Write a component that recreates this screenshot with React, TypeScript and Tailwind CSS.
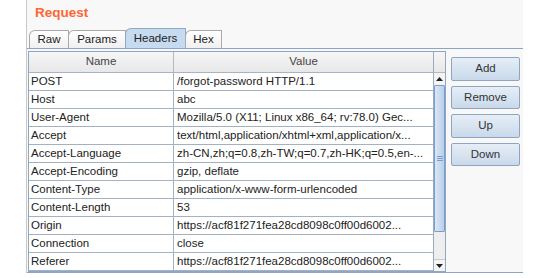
import React from "react";

const rows: [string, string][] = [
  ["POST", "/forgot-password HTTP/1.1"],
  ["Host", "abc"],
  ["User-Agent", "Mozilla/5.0 (X11; Linux x86_64; rv:78.0) Gec..."],
  ["Accept", "text/html,application/xhtml+xml,application/x..."],
  ["Accept-Language", "zh-CN,zh;q=0.8,zh-TW;q=0.7,zh-HK;q=0.5,en-..."],
  ["Accept-Encoding", "gzip, deflate"],
  ["Content-Type", "application/x-www-form-urlencoded"],
  ["Content-Length", "53"],
  ["Origin", "https://acf81f271fea28cd8098c0ff00d6002..."],
  ["Connection", "close"],
  ["Referer", "https://acf81f271fea28cd8098c0ff00d6002..."],
];

const tabs = ["Raw", "Params", "Headers", "Hex"];
const tabWidths: Record<string, string> = {
  Raw: "w-[40px]",
  Params: "w-[58px]",
  Headers: "w-[61px]",
  Hex: "w-[37px]",
};

const Btn = ({ label }: { label: string }) => (
  <button className="h-[23.5px] w-[69px] rounded-[2px] border border-[#8fa4bf] bg-gradient-to-b from-[#e6eef7] to-[#c9d9ea] text-[11.5px] text-[#333]">
    {label}
  </button>
);

const App = () => {
  return (
    <div
      className="flex h-[278px] w-[554px] bg-white text-[#222]"
      style={{ fontFamily: '"Liberation Sans", Arial, sans-serif' }}
    >
      <div className="w-[26px]" />
      <div className="flex h-[273px] w-[497px] flex-col border-l border-[#c8c8c8] bg-[#f8f8f8]">
        <div className="h-[28px] pl-[8px] pt-[3px] text-[13.5px] font-bold text-[#ff6633]">
          Request
        </div>

        {/* tabs */}
        <div className="flex h-[20px] items-end pl-[2px]">
          {tabs.map((t) => {
            const active = t === "Headers";
            return (
              <div
                key={t}
                className={`${tabWidths[t]} -mr-px flex items-center justify-center rounded-tl-[6px] rounded-tr-[1px] border border-b-0 text-[11.5px] ${
                  active
                    ? "h-[20px] border-[#8fa8c6] bg-[#c6daf0]"
                    : "h-[18px] border-[#a9a9a9] bg-gradient-to-b from-white to-[#f0f0f0]"
                }`}
              >
                {t}
              </div>
            );
          })}
        </div>

        {/* tab content */}
        <div className="flex flex-1 gap-[5px] border-y border-[#8ca5c4] pl-[1px] pt-[2px]">
          <div className="flex h-[221px] w-[418px] border border-[#8ea7c6] bg-[#f0f0f0]">
            <div className="flex w-[404px] flex-col overflow-hidden">
              <div className="flex h-[21px] shrink-0 border-b border-[#a8b4c4] bg-gradient-to-b from-[#f6f6f6] to-[#e8e8e8] text-[11.5px] text-[#444]">
                <div className="flex w-[145px] items-center justify-center border-r border-[#b8b8b8]">
                  Name
                </div>
                <div className="flex flex-1 items-center justify-center">Value</div>
              </div>
              {rows.map(([n, v]) => (
                <div
                  key={n}
                  className="flex h-[18px] shrink-0 border-b border-[#a3b1c3] bg-white text-[11.5px]"
                >
                  <div className="w-[145px] overflow-hidden whitespace-nowrap border-r border-[#a3b1c3] pl-[2px] leading-[17px]">
                    {n}
                  </div>
                  <div className="flex-1 overflow-hidden whitespace-nowrap pl-[3px] leading-[17px]">
                    {v}
                  </div>
                </div>
              ))}
            </div>

            {/* scrollbar */}
            <div className="flex w-[12px] flex-col border-l border-[#9aabbf]">
              <div className="h-[21px] border-b border-[#b8b8b8] bg-gradient-to-b from-[#f6f6f6] to-[#e8e8e8]" />
              <div className="flex h-[12px] items-center justify-center bg-[#f4f4f4]">
                <svg width="7" height="4" viewBox="0 0 7 4">
                  <path d="M0 4 L3.5 0 L7 4 Z" fill="#222" />
                </svg>
              </div>
              <div className="flex h-[147px] items-center justify-center rounded-[1px] border border-[#7c9ccc] bg-gradient-to-r from-[#dbe7f5] to-[#b9cfea]">
                <div className="flex flex-col gap-[1px]">
                  <div className="h-px w-[6px] bg-[#7c9ccc]" />
                  <div className="h-px w-[6px] bg-[#7c9ccc]" />
                  <div className="h-px w-[6px] bg-[#7c9ccc]" />
                </div>
              </div>
              <div className="flex-1 bg-[#eeeeee]" />
              <div className="flex h-[12px] items-center justify-center border-t border-[#c8c8c8] bg-[#f4f4f4]">
                <svg width="7" height="4" viewBox="0 0 7 4">
                  <path d="M0 0 L3.5 4 L7 0 Z" fill="#222" />
                </svg>
              </div>
            </div>
          </div>

          {/* buttons */}
          <div className="flex flex-col gap-[5px] pt-[6px]">
            <Btn label="Add" />
            <Btn label="Remove" />
            <Btn label="Up" />
            <Btn label="Down" />
          </div>
        </div>
      </div>
    </div>
  );
};

export default App;
